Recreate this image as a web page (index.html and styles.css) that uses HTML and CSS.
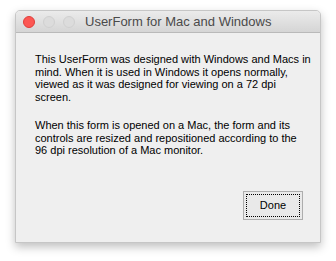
FILE: index.html
```html
<!DOCTYPE html>
<html lang="en">

<head>
    <meta charset="UTF-8">
    <title>UserForm for Mac and Windows</title>
    <link rel="stylesheet" href="styles.css">
</head>

<body>
    <div class="window">
        <div class="titlebar">
            <div class="lights">
                <span class="light close"></span>
                <span class="light"></span>
                <span class="light"></span>
            </div>
            <div class="title">UserForm for Mac and Windows</div>
        </div>
        <div class="content">
            <p>This UserForm was designed with Windows and Macs in mind. When it is used in Windows it opens normally, viewed as it was designed for viewing on a 72 dpi screen.</p>
            <p>When this form is opened on a Mac, the form and its controls are resized and repositioned according to the<br>96 dpi resolution of a Mac monitor.</p>
            <div class="actions">
                <button class="btn"><span>Done</span></button>
            </div>
        </div>
    </div>
</body>

</html>
```

FILE: styles.css
```css
* {
    box-sizing: border-box;
}

body {
    margin: 0;
    padding: 10px 15px 0 15px;
    background-color: #ffffff;
    height: 261px;
    overflow: hidden;
}

.window {
    width: 306px;
    height: 233px;
    display: flex;
    flex-direction: column;
    background-color: #efefef;
    border: 1px solid #c6c6c6;
    border-radius: 5px 5px 0 0;
    box-shadow: 0 4px 10px rgba(0, 0, 0, 0.25);
}

.titlebar {
    height: 22px;
    display: flex;
    align-items: center;
    background: linear-gradient(#ebebeb, #d5d5d5);
    border-bottom: 1px solid #b9b9b9;
    border-radius: 4px 4px 0 0;
}

.lights {
    display: flex;
    gap: 8px;
    padding-left: 7px;
}

.light {
    width: 12px;
    height: 12px;
    border-radius: 50%;
    background-color: #dcdcdc;
    border: 1px solid #d0d0d0;
}

.light.close {
    background-color: #fc5753;
    border-color: #df3e3a;
}

.title {
    margin-left: 10px;
    font-family: "Helvetica Neue", "Liberation Sans", Arial, sans-serif;
    font-size: 13px;
    color: #4a4a4a;
}

.content {
    flex: 1;
    display: flex;
    flex-direction: column;
    padding: 20px 8px 0 19px;
    font-family: Tahoma, "Liberation Sans", Arial, sans-serif;
    font-size: 11px;
    line-height: 12.7px;
    color: #000;
}

.content p {
    margin: 0 0 15px 0;
}

.actions {
    display: flex;
    justify-content: flex-end;
    margin-top: 19px;
    padding-right: 9px;
}

.btn {
    width: 60px;
    height: 29px;
    padding: 2px;
    background-color: #e9e9e9;
    border: 1px solid #adadad;
    font-family: Tahoma, "Liberation Sans", Arial, sans-serif;
    font-size: 11px;
    color: #000;
}

.btn span {
    display: flex;
    align-items: center;
    justify-content: center;
    height: 100%;
    border: 1px dotted #000;
}
```
